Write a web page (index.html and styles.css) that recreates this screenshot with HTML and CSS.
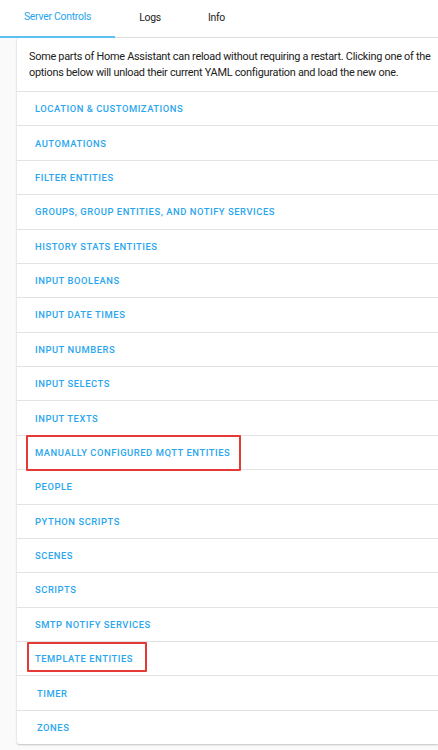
FILE: index.html
```html
<!DOCTYPE html>
<html lang="en">
<head>
<meta charset="utf-8">
<title>Server Controls</title>
<link rel="stylesheet" href="styles.css">
</head>
<body>
<nav class="tabs">
  <div class="tab tab-active">Server Controls</div>
  <div class="tab tab-logs">Logs</div>
  <div class="tab tab-info">Info</div>
</nav>
<main class="content">
  <section class="card">
    <p class="intro">Some parts of Home Assistant can reload without requiring a restart. Clicking one of the options below will unload their current YAML configuration and load the new one.</p>
    <div class="row"><span class="btn">Location &amp; Customizations</span></div>
    <div class="row"><span class="btn">Automations</span></div>
    <div class="row"><span class="btn">Filter Entities</span></div>
    <div class="row"><span class="btn">Groups, Group Entities, and Notify Services</span></div>
    <div class="row"><span class="btn">History Stats Entities</span></div>
    <div class="row"><span class="btn">Input Booleans</span></div>
    <div class="row"><span class="btn">Input Date Times</span></div>
    <div class="row"><span class="btn">Input Numbers</span></div>
    <div class="row"><span class="btn">Input Selects</span></div>
    <div class="row"><span class="btn">Input Texts</span></div>
    <div class="row"><span class="btn hl hl-mqtt">Manually Configured MQTT Entities</span></div>
    <div class="row"><span class="btn">People</span></div>
    <div class="row"><span class="btn">Python Scripts</span></div>
    <div class="row"><span class="btn">Scenes</span></div>
    <div class="row"><span class="btn">Scripts</span></div>
    <div class="row"><span class="btn">SMTP Notify Services</span></div>
    <div class="row"><span class="btn hl hl-template">Template Entities</span></div>
    <div class="row"><span class="btn btn-wide">Timer</span></div>
    <div class="row"><span class="btn btn-wide">Zones</span></div>
  </section>
</main>
</body>
</html>
```
FILE: styles.css
```css
html, body {
  margin: 0;
  padding: 0;
}
body {
  background: #fafafa;
  font-family: Roboto, "Liberation Sans", Arial, sans-serif;
  color: #212121;
  overflow-x: hidden;
}
.tabs {
  display: flex;
  height: 37px;
  background: #ffffff;
  border-bottom: 1px solid #e3e3e3;
}
.tab {
  display: flex;
  align-items: center;
  justify-content: center;
  padding-bottom: 3px;
  font-size: 10.4px;
  letter-spacing: -0.25px;
  color: #212121;
  box-sizing: border-box;
}
.tab-active {
  color: #26a5ef;
  width: 115px;
  border-bottom: 2px solid #5cc0f5;
  margin-bottom: -1px;
}
.tab-logs {
  width: 70px;
}
.tab-info {
  width: 63px;
}
.content {
  padding-left: 17px;
}
.card {
  background: #ffffff;
  border-radius: 2px 0 0 2px;
  box-shadow: 0 1px 2px rgba(0, 0, 0, 0.22), 0 0 1px rgba(0, 0, 0, 0.12);
  margin-bottom: 6px;
}
.intro {
  margin: 0;
  padding: 11px 2px 10px 12px;
  font-size: 10.9px;
  letter-spacing: -0.27px;
  line-height: 16px;
  color: #212121;
}
.row {
  box-sizing: border-box;
  height: 34.39px;
  border-top: 1px solid #e3e3e3;
  padding-left: 9px;
  display: flex;
}
.btn {
  position: relative;
  display: inline-flex;
  align-items: center;
  padding: 0 9px;
  font-size: 9.4px;
  font-weight: 500;
  letter-spacing: 0.55px;
  text-transform: uppercase;
  color: #2aa6ee;
}
.btn-wide {
  padding-left: 11px;
}
.hl::after {
  content: "";
  position: absolute;
  border: 2px solid #e53935;
  border-radius: 1px;
}
.hl-mqtt::after {
  left: 0;
  right: -2px;
  top: -1px;
  bottom: -2px;
}
.hl-template::after {
  left: 1px;
  right: -5px;
  top: 0;
  bottom: 3px;
}
```
